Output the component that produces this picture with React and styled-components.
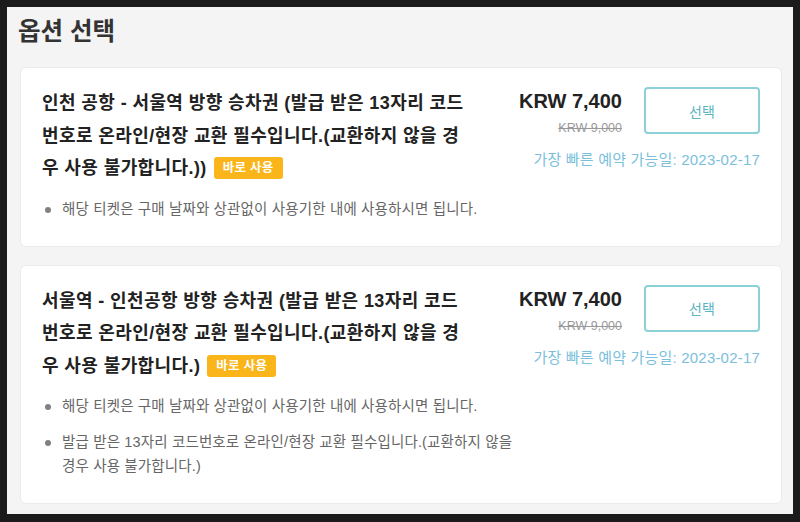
import React from "react";
import styled, { createGlobalStyle } from "styled-components";

const Global = createGlobalStyle`
  html, body { margin: 0; padding: 0; }
  body {
    background: #1b1b1b;
    font-family: "Liberation Sans", "Noto Sans CJK KR", sans-serif;
  }
  * { box-sizing: border-box; }
`;

const Frame = styled.div`
  padding: 7px 7px 8px 7px;
  height: 522px;
`;

const Page = styled.main`
  height: 507px;
  background: #f4f4f4;
  padding: 9px 11px 0 13px;
  overflow: hidden;
`;

const Heading = styled.h1`
  margin: 0 0 19px -2px;
  font-size: 24.5px;
  line-height: 32px;
  font-weight: 700;
  color: #333;
`;

const CardList = styled.div`
  display: flex;
  flex-direction: column;
  gap: 18px;
`;

const Card = styled.section`
  display: flex;
  background: #fff;
  border: 1px solid #ebebeb;
  border-radius: 6px;
  padding: 19px 21px 25px 21px;
`;

const Info = styled.div`
  flex: 1;
  min-width: 0;
`;

const Title = styled.h2`
  margin: 0;
  max-width: 429px;
  font-size: 18px;
  line-height: 32.5px;
  font-weight: 700;
  color: #222;
  letter-spacing: 0.4px;
`;

const Badge = styled.span`
  display: inline-block;
  margin-left: 7px;
  height: 22px;
  line-height: 22px;
  padding: 0 9px;
  vertical-align: 2px;
  background: #f9b51a;
  border-radius: 3px;
  color: #fff;
  font-size: 12.5px;
  font-weight: 600;
  letter-spacing: 0.3px;
`;

const Notes = styled.ul`
  list-style: none;
  margin: 12px 0 0 0;
  padding: 0;
  display: flex;
  flex-direction: column;
  gap: 12px;
`;

const Note = styled.li`
  position: relative;
  padding-left: 20px;
  font-size: 14.5px;
  line-height: 24px;
  color: #666;
  letter-spacing: 0.15px;
  &::before {
    content: "";
    position: absolute;
    left: 3px;
    top: 10px;
    width: 6px;
    height: 6px;
    border-radius: 50%;
    background: #808080;
  }
`;

const Side = styled.div`
  flex-shrink: 0;
  margin-left: auto;
  display: flex;
  flex-direction: column;
  align-items: flex-end;
  white-space: nowrap;
`;

const TopRow = styled.div`
  display: flex;
  gap: 22px;
`;

const Prices = styled.div`
  display: flex;
  flex-direction: column;
  align-items: flex-end;
`;

const Price = styled.div`
  font-size: 20px;
  line-height: 26px;
  font-weight: 700;
  color: #222;
  margin-top: 1px;
`;

const OldPrice = styled.div`
  margin-top: 5px;
  font-size: 12.5px;
  line-height: 18px;
  color: #999;
  text-decoration: line-through;
`;

const SelectButton = styled.button`
  flex-shrink: 0;
  width: 116px;
  height: 47px;
  background: #fff;
  border: 2px solid #8bd1d7;
  border-radius: 4px;
  color: #5ab5c0;
  font-family: inherit;
  font-size: 14px;
  cursor: pointer;
`;

const Earliest = styled.div`
  margin-top: 13px;
  font-size: 15px;
  line-height: 20px;
  color: #7bbfdc;
  letter-spacing: 0.2px;
`;

const options = [
  {
    title:
      "인천 공항 - 서울역 방향 승차권 (발급 받은 13자리 코드 번호로 온라인/현장 교환 필수입니다.(교환하지 않을 경우 사용 불가합니다.))",
    notes: ["해당 티켓은 구매 날짜와 상관없이 사용기한 내에 사용하시면 됩니다."],
  },
  {
    title:
      "서울역 - 인천공항 방향 승차권 (발급 받은 13자리 코드 번호로 온라인/현장 교환 필수입니다.(교환하지 않을 경우 사용 불가합니다.)",
    notes: [
      "해당 티켓은 구매 날짜와 상관없이 사용기한 내에 사용하시면 됩니다.",
      "발급 받은 13자리 코드번호로 온라인/현장 교환 필수입니다.(교환하지 않을 경우 사용 불가합니다.)",
    ],
  },
];

export default function App() {
  return (
    <>
      <Global />
      <Frame>
        <Page>
          <Heading>옵션 선택</Heading>
          <CardList>
            {options.map((o, i) => (
              <Card key={i}>
                <Info>
                  <Title>
                    {o.title}
                    <Badge>바로 사용</Badge>
                  </Title>
                  <Notes>
                    {o.notes.map((n, j) => (
                      <Note key={j}>{n}</Note>
                    ))}
                  </Notes>
                </Info>
                <Side>
                  <TopRow>
                    <Prices>
                      <Price>KRW 7,400</Price>
                      <OldPrice>KRW 9,000</OldPrice>
                    </Prices>
                    <SelectButton>선택</SelectButton>
                  </TopRow>
                  <Earliest>가장 빠른 예약 가능일: 2023-02-17</Earliest>
                </Side>
              </Card>
            ))}
          </CardList>
        </Page>
      </Frame>
    </>
  );
}
